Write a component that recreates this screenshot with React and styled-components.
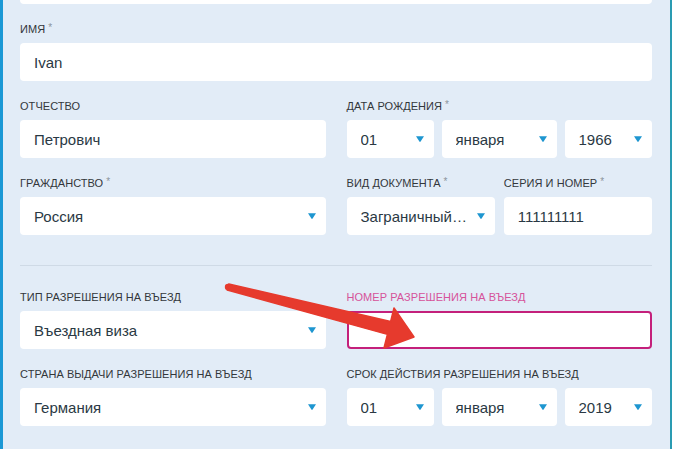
import React from "react";
import styled, { createGlobalStyle } from "styled-components";

const GlobalStyle = createGlobalStyle`
  html, body {
    margin: 0;
    padding: 0;
    background: #ffffff;
    overflow: hidden;
  }
  body {
    font-family: "Liberation Sans", Arial, sans-serif;
  }
`;

const Panel = styled.div`
  position: relative;
  width: 672px;
  height: 449px;
  box-sizing: border-box;
  background: #e2ecf7;
  border-left: 3px solid #1b98d5;
  border-right: 2px solid #2a9bb2;
  padding: 0 17px 0 17px;
  overflow: hidden;
`;

const Form = styled.div`
  width: 632px;
  margin-top: -34px;
  display: flex;
  flex-direction: column;
`;

const Row = styled.div`
  display: flex;
  gap: 21px;
  margin-top: ${(p) => p.$top ?? 18}px;
`;

const Field = styled.div`
  display: flex;
  flex-direction: column;
  flex: ${(p) => p.$flex ?? 1};
  min-width: 0;
`;

const Label = styled.div`
  height: 14px;
  line-height: 14px;
  margin-bottom: 7px;
  font-size: 11px;
  text-transform: uppercase;
  letter-spacing: 0.05px;
  color: ${(p) => (p.$active ? "#d6529a" : "#33373b")};
  white-space: nowrap;
`;

const Star = styled.span`
  color: #8c959c;
  font-size: 10px;
  vertical-align: top;
  line-height: 12px;
  margin-left: 3px;
`;

const Box = styled.div`
  box-sizing: border-box;
  height: 38px;
  background: #ffffff;
  border-radius: 4px;
  border: ${(p) => (p.$active ? "2px solid #c4207b" : "none")};
  display: flex;
  align-items: center;
  padding: 0 ${(p) => (p.$select ? 9 : 14)}px 0 ${(p) => (p.$active ? 12 : 14)}px;
  font-size: 15px;
  color: #2a3944;
  overflow: hidden;
`;

const Value = styled.span`
  flex: 1;
  min-width: 0;
  white-space: nowrap;
  overflow: hidden;
`;

const Group = styled.div`
  display: flex;
  gap: ${(p) => p.$gap ?? 8}px;
`;

const Divider = styled.div`
  height: 1px;
  background: #cfdae6;
  margin: 30px 0 6px 0;
`;

const ArrowLayer = styled.svg`
  position: absolute;
  left: -3px;
  top: 0;
  pointer-events: none;
`;

const Caret = () => (
  <svg width="10" height="8" viewBox="0 0 10 8">
    <path d="M1 1.2 L9 1.2 L5.6 6.6 Q5 7.4 4.4 6.6 Z" fill="#1e96d0" />
  </svg>
);

const Input = ({ value, active }) => (
  <Box $active={active}>
    <Value>{value}</Value>
  </Box>
);

const Select = ({ value, width }) => (
  <Box $select style={width ? { width, flex: "none" } : { flex: 1 }}>
    <Value>{value}</Value>
    <Caret />
  </Box>
);

const FieldLabel = ({ text, required, active }) => (
  <Label $active={active}>
    {text}
    {required && <Star>*</Star>}
  </Label>
);

const App = () => (
  <>
    <GlobalStyle />
    <Panel>
      <Form>
        <Input value="" />

        <Row>
          <Field>
            <FieldLabel text="Имя" required />
            <Input value="Ivan" />
          </Field>
        </Row>

        <Row>
          <Field>
            <FieldLabel text="Отчество" />
            <Input value="Петрович" />
          </Field>
          <Field>
            <FieldLabel text="Дата рождения" required />
            <Group $gap={8}>
              <Select value="01" width={87} />
              <Select value="января" width={115} />
              <Select value="1966" />
            </Group>
          </Field>
        </Row>

        <Row>
          <Field>
            <FieldLabel text="Гражданство" required />
            <Select value="Россия" />
          </Field>
          <Field>
            <Group $gap={9}>
              <Field>
                <FieldLabel text="Вид документа" required />
                <Select value="Заграничный…" />
              </Field>
              <Field>
                <FieldLabel text="Серия и номер" required />
                <Input value="111111111" />
              </Field>
            </Group>
          </Field>
        </Row>

        <Divider />

        <Row $top={18}>
          <Field>
            <FieldLabel text="Тип разрешения на въезд" />
            <Select value="Въездная виза" />
          </Field>
          <Field>
            <FieldLabel text="Номер разрешения на въезд" active />
            <Input value="" active />
          </Field>
        </Row>

        <Row>
          <Field>
            <FieldLabel text="Страна выдачи разрешения на въезд" />
            <Select value="Германия" />
          </Field>
          <Field>
            <FieldLabel text="Срок действия разрешения на въезд" />
            <Group $gap={8}>
              <Select value="01" width={87} />
              <Select value="января" width={115} />
              <Select value="2019" />
            </Group>
          </Field>
        </Row>
      </Form>

      <ArrowLayer width="677" height="449" viewBox="0 0 677 449">
        <circle cx="228" cy="287" r="3.2" fill="#e63a2d" />
        <polygon
          points="228.8,284 390.6,321.6 394,308 414,337 384,348 387.4,334.4 227.2,290"
          fill="#e63a2d"
          stroke="#e63a2d"
          strokeWidth="1.5"
          strokeLinejoin="round"
        />
      </ArrowLayer>
    </Panel>
  </>
);

export default App;
